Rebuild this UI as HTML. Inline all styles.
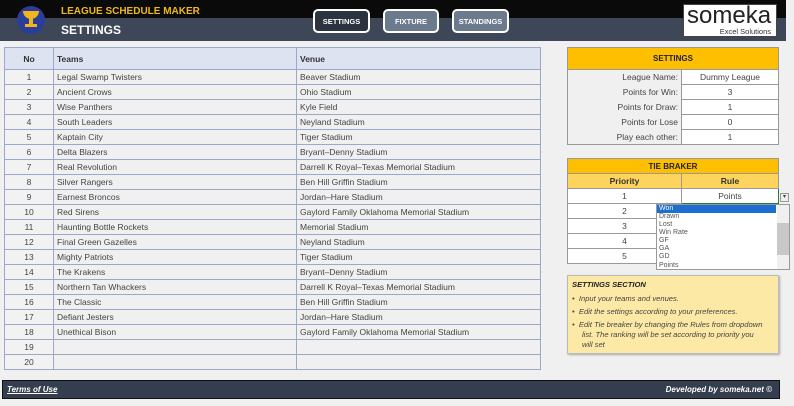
<!DOCTYPE html><html><head><meta charset="utf-8"><style>
*{margin:0;padding:0;box-sizing:border-box}
body{width:794px;height:406px;background:#f0f0f0;font-family:"Liberation Sans",sans-serif;position:relative;overflow:hidden;font-size:8.5px;color:#444}
.abs{position:absolute}
.btn{position:absolute;top:9px;height:24px;border:2px solid #fff;border-radius:5px;color:#fff;font-weight:bold;font-size:7.5px;display:flex;align-items:center;justify-content:center;background:#6c7a8e}
table{border-collapse:collapse;position:absolute}
td{border:1px solid #9aa8cc;height:15px;padding:0 3px;white-space:nowrap;overflow:hidden}
.s td{border:1px solid #999}
</style></head><body>
<div class="abs" style="left:0;top:0;width:786px;height:18px;background:#0a0a0a"></div>
<div class="abs" style="left:0;top:18px;width:786px;height:23px;background:#3d4757"></div>
<div class="abs" style="left:17px;top:6px;width:28px;height:28px;border-radius:50%;background:#2b3d9a"></div>
<div class="abs" style="left:23px;top:11px;width:16px;height:8px;background:#f2b51a;border-radius:0 0 8px 8px"></div>
<div class="abs" style="left:29px;top:19px;width:4px;height:5px;background:#f2b51a"></div>
<div class="abs" style="left:25px;top:24px;width:12px;height:3px;background:#f2b51a"></div>
<div class="abs" style="left:61px;top:6px;color:#f0b820;font-weight:bold;font-size:10px">LEAGUE SCHEDULE MAKER</div>
<div class="abs" style="left:61px;top:23px;color:#fff;font-weight:bold;font-size:12px">SETTINGS</div>
<div class="btn" style="left:313px;width:57px;background:#2c3340">SETTINGS</div>
<div class="btn" style="left:383px;width:56px">FIXTURE</div>
<div class="btn" style="left:452px;width:57px">STANDINGS</div>
<div class="abs" style="left:683px;top:4px;width:94px;height:33px;background:#fff;border:1px solid #444"><div style="position:absolute;left:3px;top:-3px;font-size:24px;color:#222">someka</div><div style="position:absolute;right:5px;top:22px;font-size:7.5px;color:#333">Excel Solutions</div></div>

<table style="left:4px;top:47px;width:537px">
<tr style="background:#dde3f0;font-weight:bold;color:#333"><td style="width:49px;height:22px;text-align:center">No</td><td style="width:243px">Teams</td><td>Venue</td></tr>
<tr><td style="text-align:center;background:#f2f2f2">1</td><td>Legal Swamp Twisters</td><td>Beaver Stadium</td></tr>
<tr><td style="text-align:center;background:#f2f2f2">2</td><td>Ancient Crows</td><td>Ohio Stadium</td></tr>
<tr><td style="text-align:center;background:#f2f2f2">3</td><td>Wise Panthers</td><td>Kyle Field</td></tr>
<tr><td style="text-align:center;background:#f2f2f2">4</td><td>South Leaders</td><td>Neyland Stadium</td></tr>
<tr><td style="text-align:center;background:#f2f2f2">5</td><td>Kaptain City</td><td>Tiger Stadium</td></tr>
<tr><td style="text-align:center;background:#f2f2f2">6</td><td>Delta Blazers</td><td>Bryant–Denny Stadium</td></tr>
<tr><td style="text-align:center;background:#f2f2f2">7</td><td>Real Revolution</td><td>Darrell K Royal–Texas Memorial Stadium</td></tr>
<tr><td style="text-align:center;background:#f2f2f2">8</td><td>Silver Rangers</td><td>Ben Hill Griffin Stadium</td></tr>
<tr><td style="text-align:center;background:#f2f2f2">9</td><td>Earnest Broncos</td><td>Jordan–Hare Stadium</td></tr>
<tr><td style="text-align:center;background:#f2f2f2">10</td><td>Red Sirens</td><td>Gaylord Family Oklahoma Memorial Stadium</td></tr>
<tr><td style="text-align:center;background:#f2f2f2">11</td><td>Haunting Bottle Rockets</td><td>Memorial Stadium</td></tr>
<tr><td style="text-align:center;background:#f2f2f2">12</td><td>Final Green Gazelles</td><td>Neyland Stadium</td></tr>
<tr><td style="text-align:center;background:#f2f2f2">13</td><td>Mighty Patriots</td><td>Tiger Stadium</td></tr>
<tr><td style="text-align:center;background:#f2f2f2">14</td><td>The Krakens</td><td>Bryant–Denny Stadium</td></tr>
<tr><td style="text-align:center;background:#f2f2f2">15</td><td>Northern Tan Whackers</td><td>Darrell K Royal–Texas Memorial Stadium</td></tr>
<tr><td style="text-align:center;background:#f2f2f2">16</td><td>The Classic</td><td>Ben Hill Griffin Stadium</td></tr>
<tr><td style="text-align:center;background:#f2f2f2">17</td><td>Defiant Jesters</td><td>Jordan–Hare Stadium</td></tr>
<tr><td style="text-align:center;background:#f2f2f2">18</td><td>Unethical Bison</td><td>Gaylord Family Oklahoma Memorial Stadium</td></tr>
<tr><td style="text-align:center;background:#f2f2f2">19</td><td></td><td></td></tr>
<tr><td style="text-align:center;background:#f2f2f2">20</td><td></td><td></td></tr>
</table>

<table class="s" style="left:567px;top:47px;width:212px">
<tr><td colspan="2" style="background:#fdbf00;height:22px;text-align:center;font-weight:bold;color:#222;font-size:8px">SETTINGS</td></tr>
<tr><td style="width:114px;text-align:right;border-top:none;border-bottom:none">League Name:</td><td style="text-align:center;background:#fff">Dummy League</td></tr>
<tr><td style="text-align:right;border-top:none;border-bottom:none">Points for Win:</td><td style="text-align:center;background:#fff">3</td></tr>
<tr><td style="text-align:right;border-top:none;border-bottom:none">Points for Draw:</td><td style="text-align:center;background:#fff">1</td></tr>
<tr><td style="text-align:right;border-top:none;border-bottom:none">Points for Lose</td><td style="text-align:center;background:#fff">0</td></tr>
<tr><td style="text-align:right;border-top:none">Play each other:</td><td style="text-align:center;background:#fff">1</td></tr>
</table>

<table class="s" style="left:567px;top:158px;width:212px">
<tr><td colspan="2" style="background:#fdbf00;text-align:center;font-weight:bold;color:#222;font-size:8px">TIE BRAKER</td></tr>
<tr style="background:#fed45c;font-weight:bold;color:#333;text-align:center"><td style="width:114px">Priority</td><td>Rule</td></tr>
<tr style="background:#fff;text-align:center"><td>1</td><td style="border:1px solid #2a7a3a">Points</td></tr>
<tr style="background:#fff;text-align:center"><td>2</td><td></td></tr>
<tr style="background:#fff;text-align:center"><td>3</td><td></td></tr>
<tr style="background:#fff;text-align:center"><td>4</td><td></td></tr>
<tr style="background:#fff;text-align:center"><td>5</td><td></td></tr>
</table>
<div class="abs" style="left:780px;top:193px;width:9px;height:9px;border:1px solid #999;background:#eee;font-size:6px;text-align:center;line-height:7px">▾</div>
<div class="abs" style="left:656px;top:204px;width:134px;height:66px;background:#fff;border:1px solid #999;font-size:7px;line-height:8.1px;color:#555">
<div style="position:absolute;left:0;top:0;width:119px;padding-left:2px;background:#1a6fd0;color:#fff">Won</div>
<div style="position:absolute;left:2px;top:8px">Drawn<br>Lost<br>Win Rate<br>GF<br>GA<br>GD<br>Points</div>
<div style="position:absolute;right:0;top:0;width:12px;height:64px;background:#f0f0f0"><div style="position:absolute;top:18px;width:12px;height:32px;background:#c8c8c8"></div></div>
</div>
<div class="abs" style="left:567px;top:275px;width:212px;height:79px;background:#fde9a6;border:1px solid #bbb;box-shadow:1px 1px 2px #aaa;font-style:italic;font-size:7.6px;color:#444;padding:4px 4px">
<div style="font-weight:bold;color:#222">SETTINGS SECTION</div>
<div style="margin-top:5px">•&nbsp; Input your teams and venues.</div>
<div style="margin-top:4px">•&nbsp; Edit the settings according to your preferences.</div>
<div style="margin-top:4px;padding-left:10px;padding-right:10px;text-indent:-10px;line-height:10px">•&nbsp; Edit Tie breaker by changing the Rules from dropdown list. The ranking will be set according to priority you will set</div>
</div>
<div class="abs" style="left:2px;top:380px;width:778px;height:19px;background:#343e4e;border:1px solid #111;color:#fff;font-style:italic;font-weight:bold;font-size:8px">
<span style="position:absolute;left:4px;top:4px;text-decoration:underline">Terms of Use</span>
<span style="position:absolute;right:7px;top:4px">Developed by someka.net ©</span></div>
</body></html>
